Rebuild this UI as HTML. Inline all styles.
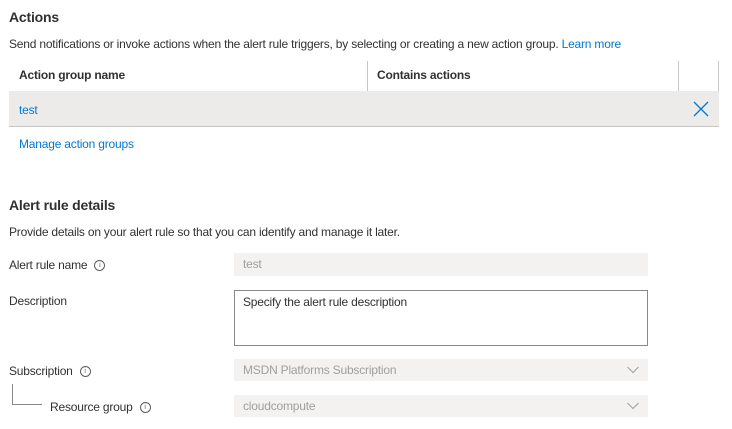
<!DOCTYPE html>
<html><head><style>
*{box-sizing:border-box;margin:0;padding:0}
body{width:732px;height:429px;background:#fff;font-family:"Liberation Sans",sans-serif;color:#323130;font-size:12px;letter-spacing:-0.2px;position:relative;overflow:hidden}
.a{position:absolute;white-space:nowrap}
h2{position:absolute;font-size:14px;font-weight:bold;left:9px;color:#323130}
.link{color:#0078d4}
.inp{position:absolute;left:234px;width:414px;background:#f3f2f1;color:#a19f9d;padding-left:9px;font-size:12px}
.info{display:inline-block;width:11px;height:11px;border:1px solid #605e5c;border-radius:50%;font-size:7px;line-height:9px;text-align:center;vertical-align:middle;margin-left:7px;color:#605e5c;letter-spacing:0}
.chev{position:absolute;right:9px;top:7px}
</style></head><body>
<h2 style="top:9px">Actions</h2>
<div class="a" style="left:9px;top:37px">Send notifications or invoke actions when the alert rule triggers, by selecting or creating a new action group. <span class="link">Learn more</span></div>
<div class="a" style="left:367px;top:61px;width:1px;height:30px;background:#c8c6c4"></div>
<div class="a" style="left:678px;top:61px;width:1px;height:30px;background:#c8c6c4"></div>
<div class="a" style="left:718px;top:61px;width:1px;height:30px;background:#c8c6c4"></div>
<div class="a" style="left:19px;top:68px;font-weight:bold;color:#323130">Action group name</div>
<div class="a" style="left:377px;top:68px;font-weight:bold">Contains actions</div>
<div class="a" style="left:9px;top:91px;width:710px;height:36px;background:#edebe9;border-bottom:1px solid #c8c6c4"></div>
<div class="a link" style="left:19px;top:103px">test</div>
<svg class="a" style="left:693px;top:101px" width="16" height="16"><path d="M1 1L15 15M15 1L1 15" stroke="#0078d4" stroke-width="1.3"/></svg>
<div class="a link" style="left:19px;top:137px">Manage action groups</div>
<h2 style="top:197px">Alert rule details</h2>
<div class="a" style="left:9px;top:225px">Provide details on your alert rule so that you can identify and manage it later.</div>
<div class="a" style="left:9px;top:258px">Alert rule name<span class="info">i</span></div>
<div class="inp" style="top:253px;height:23px;line-height:23px">test</div>
<div class="a" style="left:9px;top:294px">Description</div>
<div class="a" style="left:234px;top:290px;width:414px;height:56px;border:1px solid #8a8886;padding:4px 8px;color:#323130">Specify the alert rule description</div>
<div class="a" style="left:9px;top:364px">Subscription<span class="info">i</span></div>
<div class="inp" style="top:359px;height:22px;line-height:22px">MSDN Platforms Subscription<svg class="chev" width="12" height="8"><path d="M0.5 1L6 6.5L11.5 1" fill="none" stroke="#a19f9d"/></svg></div>
<div class="a" style="left:12px;top:384px;width:30px;height:21px;border-left:1px solid #8a8886;border-bottom:1px solid #8a8886"></div>
<div class="a" style="left:50px;top:400px">Resource group<span class="info">i</span></div>
<div class="inp" style="top:395px;height:22px;line-height:22px">cloudcompute<svg class="chev" width="12" height="8"><path d="M0.5 1L6 6.5L11.5 1" fill="none" stroke="#a19f9d"/></svg></div>
</body></html>
